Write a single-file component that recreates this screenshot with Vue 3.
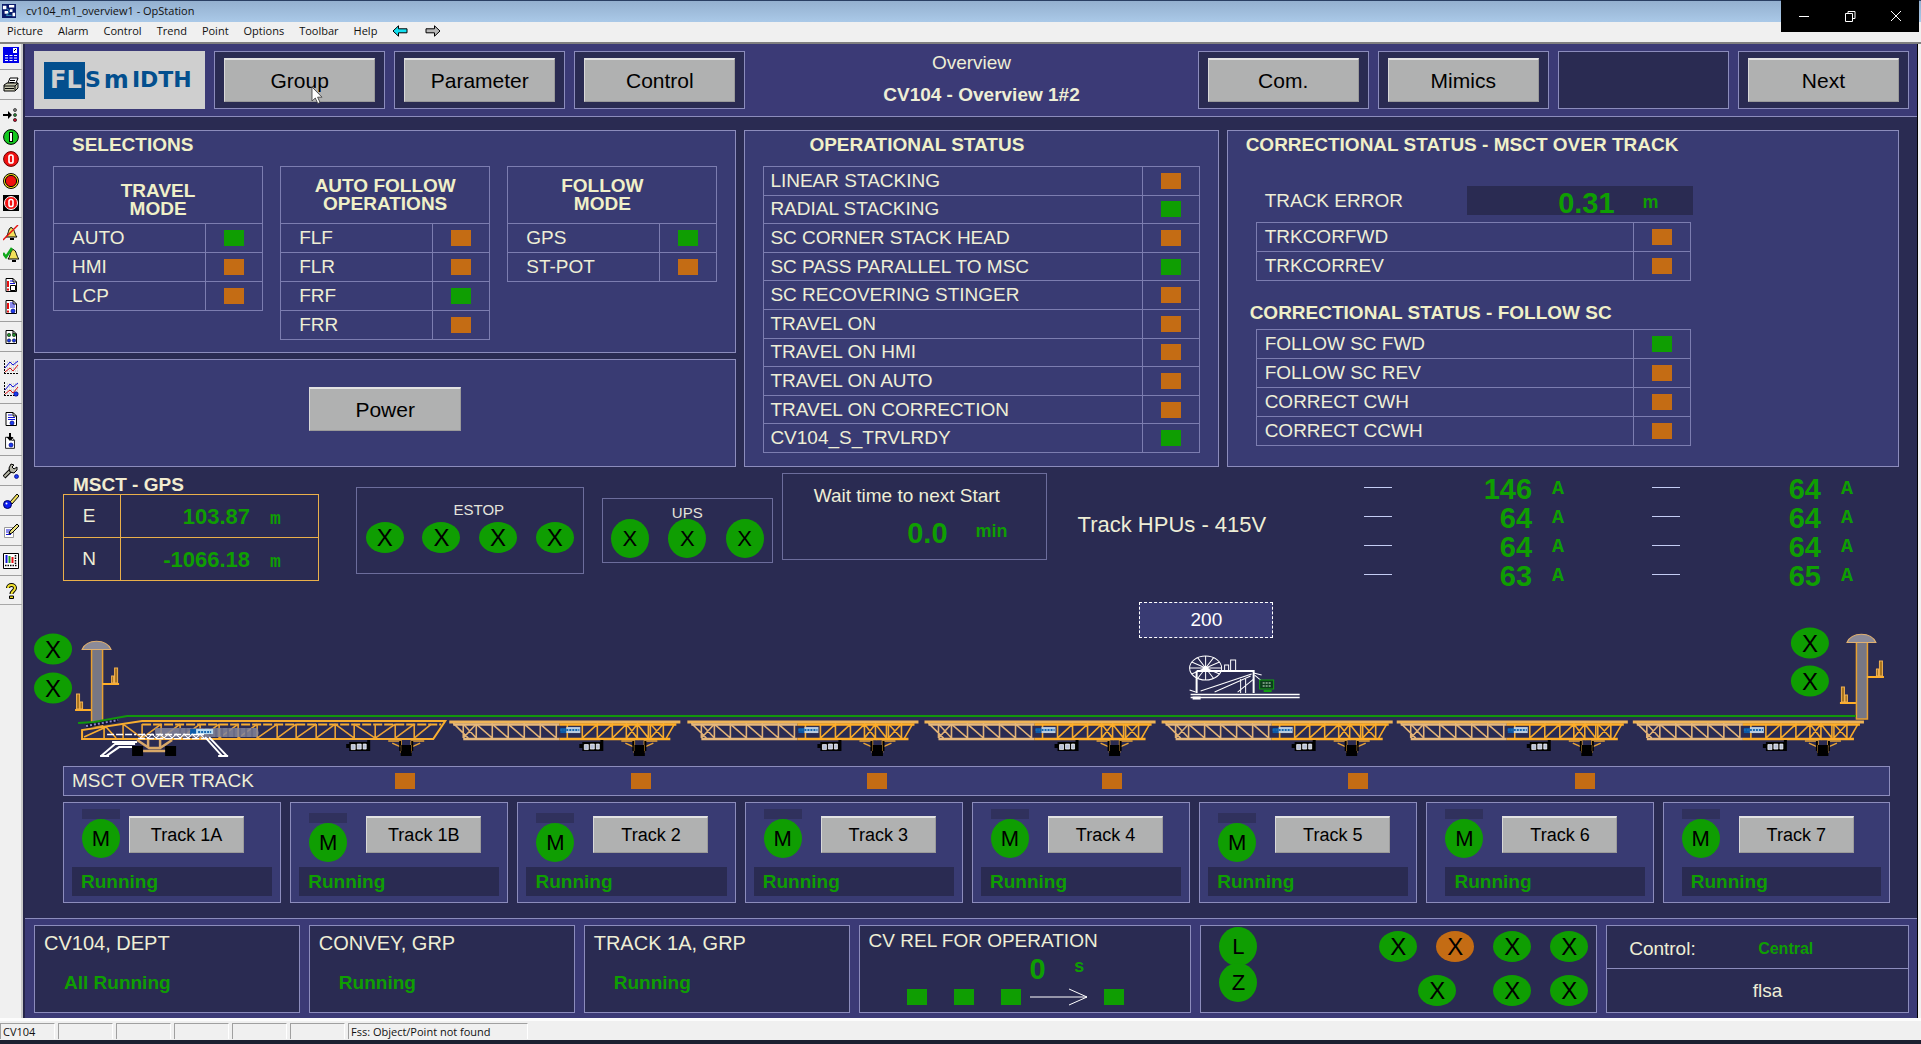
<script setup>
import { ref } from 'vue'

const MENUS = ['Picture', 'Alarm', 'Control', 'Trend', 'Point', 'Options', 'Toolbar', 'Help']

const DOC = '<path d="M3 1.5h7l3.500 3.500v9.500H3z" fill="#fff" stroke="#000"/><path d="M10 1.500v3.500h3.500" fill="none" stroke="#000"/>'
const AXES = '<path d="M1.500 1v14M1 14.500h14" stroke="#000" stroke-dasharray="2 1" fill="none"/><path d="M4 3h11M4 6h11M4 9h11M4 12h11" stroke="#bbb" stroke-dasharray="1 1"/><path d="M2 9l5-6 3 3 5-4" stroke="#1414d8" fill="none"/><path d="M2 13l5-4 3 3 5-6" stroke="#d81414" fill="none"/>'
const BALL = (x, y, r = 2) => `<circle cx="${x}" cy="${y}" r="${r}" fill="#1a3cf0" stroke="#000080" stroke-width=".7"/>`
const BELL = '<path d="M8 2.500c-3 1-2 6-5 9.500h11c-3-3-2-8.500-6-9.500z" fill="#f2e05a" stroke="#000"/><path d="M7 13h4v2H7z" fill="#000"/>'

// toolbar groups, top to bottom
const TOOLBAR = [
  [{ name: 'Summary', svg: '<path d="M0 0h16v16H0z" fill="#0000e8"/><path d="M10 1h4v5h-4z" fill="#fff"/><path d="M11 4l2-2" stroke="#000"/><path d="M2 8.500h12M2 11h12M2 13.500h12" stroke="#fff" stroke-dasharray="3 1.500"/>' }],
  [{ name: 'Print', svg: '<path d="M5 6l2-5h8l-2 5" fill="#fff" stroke="#000"/><path d="M7 3.500h5M6.500 5.500h5" stroke="#000"/><path d="M1 8l3-2h11v5l-3 3H1z" fill="#c8c8b0" stroke="#000"/><path d="M1 9h11v4M12 9l3-3M2 11.500h9" stroke="#000" fill="none"/>' }],
  [
    { name: 'Go to', svg: '<path d="M0 7h5V4l4 4-4 4V9H0z"/><circle cx="12" cy="3" r="1.500" fill="#888" stroke="#000" stroke-width=".6"/><circle cx="12" cy="8" r="1.500" fill="#2c8c3c" stroke="#000" stroke-width=".6"/><circle cx="12" cy="13" r="1.600" fill="#c8102e" stroke="#000" stroke-width=".6"/>' },
    { name: 'Start', svg: '<circle cx="8" cy="8" r="7.400" fill="#12c81e" stroke="#000"/><rect x="6.500" y="3.500" width="3" height="9" fill="#fff" stroke="#000"/>' },
    { name: 'Stop', svg: '<circle cx="8" cy="8" r="7.400" fill="#f01010" stroke="#600"/><rect x="6" y="4" width="4" height="8" rx="1.800" fill="none" stroke="#fff" stroke-width="1.700"/>' },
    { name: 'Emergency', svg: '<circle cx="8" cy="8" r="7.500" fill="#f8e020" stroke="#000"/><circle cx="8" cy="8" r="5.600" fill="#f01010" stroke="#000"/>' },
    { name: 'Master stop', svg: '<path d="M0 0h16v16H0z"/><circle cx="8" cy="8" r="6.500" fill="#f01010" stroke="#fff"/><rect x="6" y="4.500" width="4" height="7" rx="1.800" fill="none" stroke="#fff" stroke-width="1.600"/>' }
  ],
  [
    { name: 'Silence', svg: BELL + '<path d="M0 15L15 0" stroke="#e81010" stroke-width="1.400"/>' },
    { name: 'Acknowledge', svg: '<g transform="translate(2 0)">' + BELL + '</g><path d="M0 6l3 4 6-9" stroke="#10a81c" stroke-width="2.600" fill="none"/>' }
  ],
  [
    { name: 'Event log', svg: DOC + '<path d="M5 4v6" stroke="#e81010" stroke-width="2"/><path d="M5 11.500v2" stroke="#e81010" stroke-width="2"/><path d="M7 4h3M7 6.500h5" stroke="#1414d8"/><path d="M7.500 8.500h5v5h-5z" fill="#fff" stroke="#000"/>' },
    { name: 'Alarm log', svg: DOC + '<path d="M5 4v6M5 11.500v2" stroke="#e81010" stroke-width="2"/><path d="M7 4h3M7 6h5M7 8h5" stroke="#1414d8"/>' + BALL(10, 12) }
  ],
  [{ name: 'Points', svg: DOC + '<g stroke="#000" stroke-width=".5"><circle cx="6" cy="6" r="1.700" fill="#1e8c28"/><circle cx="11" cy="6" r="1.700" fill="#1e8c28"/><circle cx="6" cy="11.500" r="1.700" fill="#1a3cf0"/><circle cx="11" cy="11.500" r="1.700" fill="#1a3cf0"/></g>' }],
  [
    { name: 'Trend', svg: AXES },
    { name: 'Point trend', svg: AXES + BALL(13, 13, 2.2) }
  ],
  [
    { name: 'Report', svg: DOC + '<path d="M5 4h4M5 6.500h7M5 8.500h7" stroke="#1414d8"/>' + BALL(9, 12) },
    { name: 'Import', svg: '<g transform="translate(0 3) scale(.85)">' + DOC + '</g><path d="M6 0v4H3.500L7 8l3.500-4H8V0z"/>' + BALL(8, 12) }
  ],
  [{ name: 'Service', svg: '<path d="M1 14l7-7" stroke="#000" stroke-width="4"/><path d="M1.500 13.500l7-7" stroke="#b8b8a8" stroke-width="2"/><path d="M8 1l3 1-2 2 2 2 3-2v3l-3 3-4-1-1-4z" fill="#b8b8a8" stroke="#000"/>' + BALL(13.5, 13.5, 2) }],
  [{ name: 'Paint', svg: '<path d="M7 9l7-8 2 2-7 8z" fill="#f0e060" stroke="#000"/><circle cx="4.500" cy="11.500" r="4" fill="#0a1cf0" stroke="#000060"/><circle cx="3.500" cy="10.500" r="1" fill="#fff"/>' }],
  [{ name: 'Note', svg: '<path d="M1.500 4.500h9v10h-9z" fill="#fff" stroke="#999"/><path d="M3 7h5M3 9h4M3 11.500h5" stroke="#1414d8"/><path d="M6 11l1-3 7-7 2 2-7 7z" fill="#e8e080" stroke="#000"/>' }],
  [{ name: 'Bars', svg: '<path d="M.5.5h15v15H.5z" fill="#fff" stroke="#000"/><path d="M3.500 2v8" stroke="#1414d8" stroke-width="2"/><path d="M6.500 3v7" stroke="#1e9c28" stroke-width="2"/><path d="M9.500 4v6" stroke="#e81010" stroke-width="2"/><path d="M12.500 2v9M2 12.500h12" stroke="#000" stroke-width="1.500" stroke-dasharray="1.500 1"/>' }],
  [{ name: 'Help', svg: '<path d="M5 5c0-4 7-4 7 0 0 3-3.500 3-3.500 6" stroke="#000" stroke-width="4" fill="none"/><path d="M5 5c0-4 7-4 7 0 0 3-3.500 3-3.500 6" stroke="#f0e030" stroke-width="2" fill="none"/><path d="M6.500 13h4v2.500h-4z" fill="#e8d820" stroke="#000"/>' }]
]

const navLeft = ['Group', 'Parameter', 'Control']
const navRight = ['Com.', 'Mimics', '', 'Next']

const selections = ref([
  { title: ['TRAVEL', 'MODE'], kind: 'low', rows: [['AUTO', true], ['HMI', false], ['LCP', false]] },
  { title: ['AUTO FOLLOW', 'OPERATIONS'], kind: '', rows: [['FLF', false], ['FLR', false], ['FRF', true], ['FRR', false]] },
  { title: ['FOLLOW', 'MODE'], kind: 'lead', rows: [['GPS', true], ['ST-POT', false]] }
])

const operational = ref([
  ['LINEAR STACKING', false],
  ['RADIAL STACKING', true],
  ['SC CORNER STACK HEAD', false],
  ['SC PASS PARALLEL TO MSC', true],
  ['SC RECOVERING STINGER', false],
  ['TRAVEL ON', false],
  ['TRAVEL ON HMI', false],
  ['TRAVEL ON AUTO', false],
  ['TRAVEL ON CORRECTION', false],
  ['CV104_S_TRVLRDY', true]
])

const overTrack = ref([['TRKCORFWD', false], ['TRKCORREV', false]])
const followSc = ref([
  ['FOLLOW SC FWD', true],
  ['FOLLOW SC REV', false],
  ['CORRECT CWH', false],
  ['CORRECT CCWH', false]
])

const gps = ref([['E', '103.87'], ['N', '-1066.18']])
const hpus = ref([[146, 64, 64, 63], [64, 64, 64, 65]])
const position = ref('200')

const tracks = ref([
  { name: 'Track 1A', tight: true },
  { name: 'Track 1B', low: true },
  { name: 'Track 2', low: true },
  { name: 'Track 3' },
  { name: 'Track 4' },
  { name: 'Track 5', low: true },
  { name: 'Track 6', wide: true },
  { name: 'Track 7', wide: true }
])

const groups = ref([
  { title: 'CV104, DEPT', state: 'All Running' },
  { title: 'CONVEY, GRP', state: 'Running' },
  { title: 'TRACK 1A, GRP', state: 'Running' }
])

// bridge spans: left edge of every identical truss
const SPANS = [449, 687, 924, 1161, 1396, 1632]
const SPOKES = Array.from({ length: 12 }, (_, i) => {
  const a = (i * Math.PI) / 6
  return `M1205 669l${(Math.cos(a) * 16).toFixed(1)} ${(Math.sin(a) * 12).toFixed(1)}`
}).join('')

// first truss, posts with diagonals between them
const FIRST_POSTS = [123, 142, 161, 180, 200, 219, 238, 257, 277, 296, 316, 335, 354, 375, 395, 414]
const FIRST_WEB = FIRST_POSTS.map((x, i) => {
  const next = FIRST_POSTS[i + 1] || 431
  const down = x === 123 || x === 335 || x === 354
  return `M${x} 725v14` + (down ? `M${x} 725L${next} 739` : `M${x} 739L${next} 725`)
}).join('')
const TICKS = Array.from({ length: 13 }, (_, i) => `M${180 + i * 6} 729v9`).join('')
</script>

<template>
  <div class="window">
    <header class="titlebar">
      <svg class="app-icon" viewBox="0 0 16 16" width="14" height="14" aria-hidden="true">
        <path d="M0 0h16v16H0z" fill="#0a1a6a" />
        <path d="M1 2h4v4H1zM8 1h6v3H8zM3 8h4v3H3zM9 6h3v3H9zM12 10h3v4h-3z" fill="#fff" />
        <path d="M5 5l4 3-4 5h6" stroke="#4ac" fill="none" />
      </svg>
      <span>cv104_m1_overview1 - OpStation</span>
    </header>

    <div class="caption-buttons">
      <button aria-label="Minimize"><svg viewBox="0 0 12 12" width="12" height="12"><path d="M1 6.500h10" /></svg></button>
      <button aria-label="Restore"><svg viewBox="0 0 12 12" width="12" height="12"><path d="M1.500 3.500h7v8h-7zM4 3.500v-2h7v7H8.500" /></svg></button>
      <button aria-label="Close"><svg viewBox="0 0 12 12" width="12" height="12"><path d="M1 1l10 10M11 1L1 11" /></svg></button>
    </div>

    <nav class="menubar">
      <button v-for="m in MENUS" :key="m">{{ m }}</button>
      <button class="history" aria-label="Back">
        <svg viewBox="0 0 16 12" width="16" height="12"><path d="M6.500.8v3h8.500v4H6.500v3.400L1 6z" fill="#12e0f0" stroke="#000" /></svg>
      </button>
      <button class="history" aria-label="Forward">
        <svg viewBox="0 0 16 12" width="16" height="12"><path d="M9.500.8v3H1v4h8.500v3.400L15 6z" fill="#b8b8b8" stroke="#000" /></svg>
      </button>
    </nav>

    <div class="workspace">
      <aside class="toolbar">
        <div class="tools">
          <div v-for="(group, g) in TOOLBAR" :key="g" class="tool-group">
            <button v-for="t in group" :key="t.name" :aria-label="t.name">
              <svg viewBox="0 0 16 16" width="16" height="16" v-html="t.svg"></svg>
            </button>
          </div>
        </div>
      </aside>

      <div class="screen">
        <header class="top">
          <div class="logo">
            <span class="logo-fl">FL</span>
            <span class="logo-s">S</span>
            <span class="logo-m">m</span>
            <span class="logo-rest">IDTH</span>
          </div>
          <div v-for="n in navLeft" :key="n" class="slot"><button class="key">{{ n }}</button></div>
          <div class="heading">
            <p>Overview</p>
            <h1>CV104 - Overview 1#2</h1>
          </div>
          <div v-for="n in navRight" :key="n" class="slot"><button v-if="n" class="key">{{ n }}</button></div>
          <svg class="pointer" viewBox="0 0 12 19" width="12" height="19" aria-hidden="true">
            <path d="M1 1v14l3.300-3 2.500 5.500 2.200-1-2.400-5.300H11z" fill="#fff" stroke="#333" stroke-width=".8" />
          </svg>
        </header>

        <main class="body">
          <section class="panels">
            <div class="left-col">
              <div class="panel selections">
                <h2>SELECTIONS</h2>
                <div class="mode-tables">
                  <table v-for="s in selections" :key="s.title.join()" class="grid-table">
                    <thead>
                      <tr><th colspan="2" :class="s.kind">{{ s.title[0] }}<br>{{ s.title[1] }}</th></tr>
                    </thead>
                    <tbody>
                      <tr v-for="[label, on] in s.rows" :key="label">
                        <td>{{ label }}</td>
                        <td class="lamp-cell"><i class="lamp" :class="{ on }"></i></td>
                      </tr>
                    </tbody>
                  </table>
                </div>
              </div>
              <div class="panel power"><button class="key">Power</button></div>
            </div>

            <div class="panel operational">
              <h2>OPERATIONAL STATUS</h2>
              <table class="grid-table close">
                <tbody>
                  <tr v-for="[label, on] in operational" :key="label">
                    <td>{{ label }}</td>
                    <td class="lamp-cell"><i class="lamp" :class="{ on }"></i></td>
                  </tr>
                </tbody>
              </table>
            </div>

            <div class="panel correctional">
              <h2>CORRECTIONAL STATUS - MSCT OVER TRACK</h2>
              <div class="track-error">
                <span>TRACK ERROR</span>
                <div class="error-box"><b class="big">0.31</b><b class="unit">m</b></div>
              </div>
              <table class="grid-table close">
                <tbody>
                  <tr v-for="[label, on] in overTrack" :key="label">
                    <td>{{ label }}</td>
                    <td class="lamp-cell"><i class="lamp" :class="{ on }"></i></td>
                  </tr>
                </tbody>
              </table>
              <h2 class="second">CORRECTIONAL STATUS - FOLLOW SC</h2>
              <table class="grid-table close">
                <tbody>
                  <tr v-for="[label, on] in followSc" :key="label">
                    <td>{{ label }}</td>
                    <td class="lamp-cell"><i class="lamp" :class="{ on }"></i></td>
                  </tr>
                </tbody>
              </table>
            </div>
          </section>

          <section class="readouts">
            <div class="gps">
              <h2>MSCT - GPS</h2>
              <table>
                <tbody>
                  <tr v-for="[axis, value] in gps" :key="axis">
                    <th>{{ axis }}</th>
                    <td><b>{{ value }}</b><b class="mono">m</b></td>
                  </tr>
                </tbody>
              </table>
            </div>
            <div class="box estop">
              <p>ESTOP</p>
              <div class="discs"><span v-for="n in 4" :key="n" class="disc flat">X</span></div>
            </div>
            <div class="box ups">
              <p>UPS</p>
              <div class="discs"><span v-for="n in 3" :key="n" class="disc">X</span></div>
            </div>
            <div class="box wait">
              <p>Wait time to next Start</p>
              <div class="wait-value"><b class="big">0.0</b><b class="unit">min</b></div>
            </div>
            <p class="hpu-title">Track HPUs - 415V</p>
            <div v-for="(col, c) in hpus" :key="c" class="hpu" :class="`hpu-${c + 1}`">
              <div v-for="(amps, i) in col" :key="i" class="hpu-row">
                <i class="dash"></i><b class="big">{{ amps }}</b><b class="mono">A</b>
              </div>
            </div>
          </section>

          <section class="mimic">
            <svg viewBox="25 600 1891 160" aria-hidden="true">
              <!-- service platforms and masts -->
              <g v-for="m in [[82, 642], [1846, 635]]" :key="m[0]" :transform="`translate(${m[0]} ${m[1]})`">
                <path d="M9.500 8v77h11V8" fill="#777784" stroke="#e8a030" stroke-width="1.500" />
                <path d="M0 8.500C5-2.500 24-2.500 29 8.500z" fill="#8b8a98" stroke="#e0b070" />
                <path d="M20 43h17M-7 69H9" stroke="#ffae28" stroke-width="2" fill="none" />
                <path d="M32.500 27h3v15h-3zM29.500 35h2v7h-2zM-5.500 53h3v15h-3zM-2 61h2.500v7H-2z" fill="#a8741e" stroke="#f0b050" />
              </g>

              <!-- first truss -->
              <path d="M142 722H445L433 740H82V731z" fill="none" stroke="#f8ae30" stroke-width="2" />
              <path d="M142 725.500H441" stroke="#f8ae30" stroke-dasharray="9 2" stroke-width="2" />
              <path :d="FIRST_WEB" stroke="#eda435" stroke-width="1.600" fill="none" />
              <path d="M84 738l22-10 10 11M104 728v11" stroke="#f8ae30" stroke-width="1.600" fill="none" />
              <path d="M155 729h102q3 5 0 9H155z" fill="#85869a" opacity=".85" />
              <path :d="TICKS" stroke="#6a6b84" stroke-width="2" />
              <path d="M190 730h6v6h-6z" fill="#0a5aa8" /><path d="M196 730h17v5h-17z" fill="#b8dcf0" />
              <path d="M198 733h13" stroke="#1868b0" stroke-width="2" stroke-dasharray="2 1" />
              <path d="M107 735.500h29M138 739.500h70M138 735.500h66" stroke="#fff" stroke-width="1.500" stroke-dasharray="7 2" fill="none" />
              <path d="M140 739l4-4 4 4 4-4 4 4 4-4 4 4 4-4 4 4 4-4 4 4 4-4 4 4 4-4 4 4 4-4 4 4" stroke="#fff" fill="none" />
              <path d="M101 757l14-12h20M106 757l13-9h13M100 757h9M112 743h25" stroke="#fff" stroke-width="2" fill="none" />
              <path d="M205 738l17 19M209 738l18 19M218 757h10" stroke="#fff" stroke-width="2" fill="none" />
              <path d="M132 747h11v10h-11zM165 747h11v10h-11z" />
              <path d="M143 752h22M148 741v8M160 741v8M137 741l12 8h11l12-8" stroke="#d8a868" stroke-width="2.500" fill="none" />
              <path d="M86 727l32-6" stroke="#101030" stroke-width="4" />
              <path d="M86 727l32-6" stroke="#8888c8" stroke-dasharray="2 2" stroke-width="2" />

              <!-- repeated spans -->
              <g v-for="x in SPANS" :key="x" :transform="`translate(${x} 721)`" fill="none">
                <path d="M4 3L19 18M14 4v14M27 4v14M14 4l13 14M27 4L14 18M27 4l16 14V4l16 14V4l16 14V4l16 14V4l16 14V4" stroke="#e2b276" stroke-width="1.600" />
                <path d="M118 4v14M133 4v14l15-14v14l15-14v14l14-14v14l11-14v14L177 4M188 4l11 14V4M201 4v14l13-14v14L201 4M225 4l-8 14" stroke="#f5a92c" stroke-width="1.600" />
                <path d="M0 2H231" stroke="#eeb458" stroke-width="3" />
                <path d="M4 4.500H110M14 19H110" stroke="#e6b87c" stroke-width="2.500" />
                <path d="M110 4.500H227M110 19H221" stroke="#ffae28" stroke-width="2.500" />
                <path d="M111 8h6v5h-6z" fill="#0a5aa8" /><path d="M117 7h14v6h-14z" fill="#b8cce0" />
                <path d="M111 10h19" stroke="#1868b0" stroke-width="2" stroke-dasharray="2 1" />
              </g>

              <!-- drives and wheels under each span -->
              <g v-for="x in [216, ...SPANS]" :key="x" :transform="`translate(${x} 741)`">
                <path d="M133 2h18v-2h3v11h-21v-3h-3V4h3z" />
                <path d="M135 4.500h4v5h-4zM141 4h4v5h-4zM147 4h3v5h-3z" fill="#b8c0d8" stroke="#fff" stroke-width=".7" />
                <path d="M172 1h13v12M208 1h-13v12M176 3l9 4M204 3l-9 4" fill="none" stroke="#e8a438" stroke-width="1.500" />
                <path d="M184.500 5h11v11h-11zM183 1v10h2V1zM195 1v10h2V1z" />
              </g>

              <path d="M78 724l16-1 33-6H1855" fill="none" stroke="#12960c" stroke-width="2" />

              <!-- spreader car -->
              <g stroke="#fff" fill="none">
                <ellipse cx="1205" cy="669" rx="16" ry="12" />
                <path :d="SPOKES" />
                <path d="M1196 672h57v22M1196 672v22" stroke-width="2" />
                <path d="M1200 692l51-17M1214 693l36-16M1253 674l8 2M1253 680l-16 13M1240 680v14M1245 680v14" />
                <path d="M1224 671v-5h4v5M1230 671v-10h5v10" />
                <path d="M1190 695.500H1299M1190 698.500H1299" stroke-width="1.500" />
                <path d="M1192 699h8" stroke-width="3" />
                <path d="M1189 691l6 2M1254 676l6 5" />
              </g>
              <path d="M1259 681h14v9h-14z" fill="#0c3c1c" stroke="#12a010" />
              <path d="M1262 684h9M1262 687h9" stroke="#d8f0d8" stroke-dasharray="2 1" />
              <path d="M1263 692h8" stroke="#12a010" stroke-width="2" />

              <g class="nodes">
                <template v-for="p in [[53, 650], [53, 689], [1809, 644], [1809, 682]]" :key="p.join()">
                  <ellipse :cx="p[0]" :cy="p[1]" rx="19" ry="15.500" />
                  <text :x="p[0]" :y="p[1] + 9">X</text>
                </template>
              </g>
            </svg>
            <input v-model="position" class="position" aria-label="Spreader position">
          </section>

          <section class="over-track">
            <span>MSCT OVER TRACK</span>
            <i v-for="n in 6" :key="n" class="lamp"></i>
          </section>

          <section class="tracks">
            <div v-for="t in tracks" :key="t.name" class="panel track" :class="{ tight: t.tight, low: t.low, wide: t.wide }">
              <div class="track-top">
                <div class="motor"><i></i><span class="disc">M</span></div>
                <button class="key">{{ t.name }}</button>
              </div>
              <div class="state">Running</div>
            </div>
          </section>
        </main>

        <footer class="bottom">
          <div v-for="g in groups" :key="g.title" class="box group">
            <h3>{{ g.title }}</h3>
            <b>{{ g.state }}</b>
          </div>
          <div class="box release">
            <h3>CV REL FOR OPERATION</h3>
            <div class="release-value"><b class="big">0</b><b class="mono">s</b></div>
            <div class="release-chain">
              <i v-for="n in 3" :key="n" class="lamp on"></i>
              <svg viewBox="0 0 58 18" width="58" height="18"><path d="M0 9h57M39 1l18 8-18 8" /></svg>
              <i class="lamp on"></i>
            </div>
          </div>
          <div class="box interlocks">
            <div class="stack"><span class="disc">L</span><span class="disc">Z</span></div>
            <div class="lock-rows">
              <div class="discs">
                <span class="disc flat">X</span><span class="disc flat warn">X</span><span class="disc flat">X</span><span class="disc flat">X</span>
              </div>
              <div class="discs">
                <span class="disc flat apart">X</span><span class="disc flat">X</span><span class="disc flat">X</span>
              </div>
            </div>
          </div>
          <div class="box control">
            <div class="control-row"><span>Control:</span><b>Central</b></div>
            <div class="user">flsa</div>
          </div>
        </footer>
      </div>
    </div>

    <footer class="statusbar">
      <span class="cell">CV104</span>
      <span v-for="n in 5" :key="n" class="cell"></span>
      <span class="cell message">Fss: Object/Point not found</span>
    </footer>
    <div class="taskbar"></div>
  </div>
</template>

<style>
body {
  margin: 0;
  background: #f0f0f0;
}
</style>

<style scoped>
* {
  box-sizing: border-box;
}

.window {
  position: relative;
  min-height: 100vh;
  display: flex;
  flex-direction: column;
  background: #f0f0f0;
  font-family: 'Liberation Sans', Arial, sans-serif;
  font-size: 19px;
  line-height: 22px;
  color: #eeeed6;
}

p, h1, h2, h3 {
  margin: 0;
  font-size: 19px;
}

p {
  font-weight: 400;
}

button {
  font-family: inherit;
  padding: 0;
  border: 0;
  background: none;
}

.titlebar,
.menubar,
.statusbar {
  font-family: 'Open Sans', 'Noto Sans', sans-serif;
  font-size: 11px;
  color: #101010;
}

.titlebar {
  height: 22px;
  display: flex;
  align-items: center;
  gap: 10px;
  padding: 0 0 2px 2px;
  border-top: 1px solid #2a3f63;
  background: linear-gradient(#94b0cf, #aac9e8);
}

.caption-buttons {
  position: absolute;
  top: 0;
  right: 2px;
  display: flex;
  background: #000;
}

.caption-buttons button {
  width: 46px;
  height: 32px;
  display: flex;
  align-items: center;
  justify-content: center;
}

.caption-buttons path {
  fill: none;
  stroke: #fff;
}

.menubar {
  height: 20px;
  display: flex;
  align-items: center;
  gap: 15px;
  padding: 0 0 2px 7px;
}

.menubar button {
  font-size: 11px;
  line-height: 18px;
  color: #101010;
}

.menubar .history {
  display: flex;
  margin-right: 2px;
}

.workspace {
  flex: 1;
  display: flex;
  padding-right: 3px;
  border-top: 2px solid #808080;
}

.toolbar {
  width: 25px;
  flex: none;
  border-right: 2px solid #26264a;
  box-shadow: inset -2px 0 #c8c8c8;
}

.tools {
  width: 22px;
  border-bottom: 1px solid #a8a8a8;
  padding-bottom: 2px;
}

.tool-group + .tool-group {
  margin-top: 3px;
  padding-top: 4px;
  border-top: 1px solid #a0a0a0;
}

.tool-group button {
  width: 22px;
  height: 22px;
  display: flex;
  align-items: center;
  justify-content: center;
}

.screen {
  flex: 1;
  min-width: 0;
  display: flex;
  flex-direction: column;
  background: #2a2b52;
  border-right: 1px solid #000;
}

.top {
  position: relative;
  display: grid;
  grid-template-columns: repeat(4, 171fr) 434fr repeat(4, 171fr);
  gap: 9px;
  height: 73px;
  padding: 7px 8px 7px 9px;
  background: #3b3a76;
  border-bottom: 1px solid #8c8cbc;
}

.logo {
  display: flex;
  align-items: center;
  padding-left: 10px;
  background: #cfcfcf;
  color: #034f8e;
  font-family: 'DejaVu Sans', sans-serif;
  font-weight: 700;
}

.logo-fl {
  height: 37px;
  width: 41px;
  padding-left: 6px;
  background: #034f8e;
  color: #cfcfcf;
  font-size: 24px;
  line-height: 36px;
}

.logo-s {
  font-size: 22px;
}

.logo-m {
  margin: 0 3px;
  font-size: 24px;
}

.logo-rest {
  font-size: 22px;
}

.slot {
  padding: 6px 9px;
  background: #2a2b52;
  border: 1px solid #8c8cbc;
}

.key {
  background: #b0b1b1;
  border: 1px solid #9a9a9a;
  border-top: 2px solid #e2e2e2;
  border-left-color: #d8d8d8;
  color: #000;
  font-size: 21px;
}

.slot .key {
  width: 100%;
  height: 100%;
}

.heading {
  text-align: center;
  padding-top: 1px;
}

.heading h1 {
  margin-top: 10px;
  padding-left: 20px;
}

.pointer {
  position: absolute;
  left: 286px;
  top: 42px;
}

.body {
  flex: 1;
  padding-top: 13px;
}

.panels {
  display: grid;
  grid-template-columns: 702fr 474fr 672fr;
  gap: 8px;
  height: 337px;
  padding: 0 18px 0 9px;
}

.panel {
  background: #393b73;
  border: 1px solid #8c8cbc;
}

.panel h2 {
  margin-bottom: 10px;
  color: #f0f0c8;
}

.left-col {
  display: flex;
  flex-direction: column;
  gap: 6px;
}

.selections {
  height: 223px;
  padding: 3px 18px;
}

.selections h2 {
  padding-left: 19px;
}

.mode-tables {
  display: grid;
  grid-template-columns: repeat(3, 1fr);
  align-items: start;
  gap: 17px;
}

.grid-table {
  width: 100%;
  border-collapse: collapse;
}

.grid-table th,
.grid-table td {
  padding: 0;
  border: 1px solid #7c7db0;
}

.grid-table th {
  height: 57px;
  line-height: 18px;
  color: #f0f0c8;
}

.grid-table th.low {
  padding-top: 10px;
}

.grid-table th.lead {
  padding-right: 20px;
}

.grid-table td {
  height: 29px;
  padding-left: 18px;
}

.close td {
  padding-left: 6px;
}

.grid-table .lamp-cell {
  width: 57px;
  padding: 0 18px;
}

.lamp {
  display: block;
  width: 20px;
  height: 16px;
  background: #c46c14;
}

.lamp.on {
  background: #0f9e02;
}

.power {
  flex: 1;
  display: flex;
  align-items: center;
  justify-content: center;
  padding-bottom: 8px;
}

.power .key {
  width: 152px;
  height: 44px;
}

.operational {
  padding: 3px 18px;
}

.operational h2 {
  padding-left: 46px;
}

.operational .grid-table {
  height: 287px;
}

.operational .grid-table td {
  height: 28px;
}

.correctional {
  padding: 3px 18px;
}

.correctional .grid-table {
  width: 435px;
  margin-left: 10px;
}

.correctional .grid-table td {
  padding-left: 8px;
}

.correctional .grid-table .lamp-cell {
  padding: 0 18px;
}

.correctional h2.second {
  margin: 21px 0 5px;
  padding-left: 4px;
}

.track-error {
  display: flex;
  align-items: center;
  margin: 30px 0 7px 19px;
}

.track-error > span {
  width: 202px;
}

.error-box {
  width: 226px;
  height: 29px;
  display: flex;
  justify-content: flex-end;
  gap: 28px;
  padding-right: 34px;
  background: #2a2b52;
}

.big,
.unit,
.mono {
  color: #0f9e02;
}

.big {
  font-size: 29px;
  line-height: 36px;
}

.unit {
  font-size: 18px;
  line-height: 32px;
}

.error-box .big {
  line-height: 34px;
}

.mono {
  font-family: 'Liberation Mono', monospace;
  font-size: 18px;
}

.readouts {
  display: grid;
  grid-template-columns: 256fr 37fr 228fr 18fr 171fr 9fr 265fr 31fr 187fr 98fr 200fr 88fr 201fr;
  align-items: start;
  height: 132px;
  padding: 0 64px 0 38px;
}

.gps {
  grid-column: 1;
  padding-top: 8px;
}

.gps h2 {
  padding-left: 10px;
  line-height: 19px;
  color: #f2ecd0;
}

.gps table {
  width: 100%;
  border-collapse: collapse;
}

.gps th,
.gps td {
  height: 43px;
  padding: 0;
  border: 1px solid #eab04a;
}

.gps th {
  width: 57px;
  padding-right: 6px;
  font-weight: 400;
}

.gps td {
  padding: 4px 37px 0 0;
  text-align: right;
  color: #0f9e02;
  font-size: 22px;
}

.gps .mono {
  margin-left: 20px;
}

.box {
  background: #2a2b52;
  border: 1px solid #6c6d9c;
}

.estop {
  grid-column: 3;
  height: 87px;
  margin-top: 20px;
  padding: 13px 9px;
}

.estop p,
.ups p {
  font-size: 15px;
  line-height: 18px;
  text-align: center;
  color: #e4e4dc;
}

.estop p {
  padding-left: 18px;
  margin-bottom: 3px;
}

.ups {
  grid-column: 5;
  height: 65px;
  margin-top: 31px;
  padding: 8px;
}

.ups p {
  line-height: 12px;
}

.discs {
  display: flex;
  justify-content: space-between;
}

.disc {
  width: 38px;
  height: 39px;
  border-radius: 50%;
  background: #0f9e02;
  color: #000;
  font-size: 22px;
  line-height: 39px;
  text-align: center;
}

.disc.flat {
  height: 31px;
  font-size: 24px;
  line-height: 32px;
}

.disc.warn {
  background: #c46c14;
}

.wait {
  grid-column: 7;
  height: 87px;
  margin-top: 6px;
  padding-top: 11px;
}

.wait p {
  padding-left: 31px;
}

.wait-value {
  display: flex;
  justify-content: flex-end;
  gap: 28px;
  margin-top: 8px;
  padding-right: 38px;
}

.hpu-title {
  grid-column: 9;
  margin-top: 45px;
  font-size: 22px;
  line-height: 26px;
  white-space: nowrap;
}

.hpu {
  margin-top: 8px;
}

.hpu-1 {
  grid-column: 11;
}

.hpu-2 {
  grid-column: 13;
}

.hpu-row {
  display: flex;
  height: 29px;
}

.hpu .big {
  flex: 1;
  line-height: 29px;
  text-align: right;
}

.hpu .mono {
  width: 12px;
  margin-left: 20px;
  font-size: 20px;
  line-height: 28px;
}

.dash {
  width: 28px;
  height: 1px;
  margin-top: 12px;
  background: #c4ccf4;
}

.mimic {
  position: relative;
  margin-bottom: 7px;
}

.mimic svg {
  display: block;
  width: 100%;
}

.nodes ellipse {
  fill: #0f9e02;
}

.nodes text {
  font-size: 24px;
  text-anchor: middle;
  fill: #000;
}

.position {
  position: absolute;
  left: 58.9%;
  top: 3px;
  width: 134px;
  height: 36px;
  border: 1px dashed #fff;
  background: #393b73;
  color: #fff;
  font-family: inherit;
  font-size: 19px;
  text-align: center;
}

.over-track {
  display: grid;
  grid-template-columns: 331fr 236fr 236fr 236fr 246fr 227fr 314fr;
  align-items: center;
  height: 30px;
  margin: 0 27px 6px 38px;
  background: #393b73;
  border: 1px solid #8c8cbc;
}

.over-track span {
  padding-left: 8px;
}

.tracks {
  display: grid;
  grid-template-columns: repeat(6, 218fr) repeat(2, 227fr);
  gap: 9px;
  padding: 0 27px 14px 38px;
}

.track {
  height: 101px;
  padding: 6px 8px;
}

.track-top {
  display: flex;
  align-items: flex-start;
  gap: 19px;
  height: 58px;
  padding-left: 10px;
}

.tight .track-top {
  gap: 9px;
}

.motor i {
  display: block;
  width: 38px;
  height: 10px;
  background: #30315d;
}

.motor .disc {
  display: block;
}

.low .motor {
  padding-top: 4px;
}

.track .key {
  width: 115px;
  height: 37px;
  margin-top: 7px;
  font-size: 18px;
}

.state {
  height: 29px;
  padding-left: 9px;
  background: #2a2b52;
  color: #0f9e02;
  font-weight: 700;
  line-height: 29px;
}

.wide .state {
  margin-left: 10px;
}

.bottom {
  display: grid;
  grid-template-columns: 266fr 266fr 266fr 333fr 397fr 303fr;
  gap: 9px;
  height: 100px;
  padding: 6px 8px 5px 9px;
  background: #3b3a76;
  border-top: 1px solid #8c8cbc;
}

.bottom .box {
  border-color: #8c8cbc;
}

.bottom h3 {
  font-weight: 400;
}

.group {
  padding: 6px 9px;
}

.group h3 {
  font-size: 20px;
  margin-bottom: 18px;
}

.group b {
  padding-left: 20px;
  color: #0f9e02;
}

.release {
  padding: 4px 9px;
}

.release-value {
  display: flex;
  gap: 28px;
  height: 36px;
  padding-left: 161px;
}

.release-value .big {
  line-height: 34px;
}

.release-value .mono {
  line-height: 30px;
}

.release-chain {
  display: flex;
  align-items: center;
  gap: 27px;
  padding-left: 38px;
}

.release-chain svg {
  margin: 0 -11px 0 -18px;
  fill: none;
  stroke: #fff;
}

.interlocks {
  display: flex;
  justify-content: space-between;
  padding: 1px 8px 1px 18px;
}

.stack {
  display: flex;
  flex-direction: column;
}

.stack .disc + .disc {
  margin-top: -3px;
}

.lock-rows {
  display: flex;
  flex-direction: column;
  justify-content: space-between;
  padding: 4px 0 5px;
}

.lock-rows .discs {
  gap: 19px;
  justify-content: flex-end;
}

.apart {
  margin-right: 18px;
}

.control-row,
.user {
  height: 43px;
  line-height: 43px;
}

.control-row {
  display: flex;
  padding-left: 22px;
  line-height: 46px;
  border-bottom: 1px solid #8c8cbc;
}

.control-row span {
  width: 129px;
}

.control-row b {
  font-size: 16px;
  color: #0f9e02;
}

.user {
  padding-left: 20px;
  text-align: center;
}

.statusbar {
  display: flex;
  gap: 3px;
  height: 22px;
  padding: 2px 0 1px;
  border-top: 3px solid #fcfcfc;
  font-size: 11px;
  line-height: 15px;
}

.cell {
  width: 55px;
  padding-left: 2px;
  border-top: 1px solid #a0a0a0;
  border-left: 1px solid #a0a0a0;
  border-right: 1px solid #fff;
}

.message {
  width: 180px;
  white-space: nowrap;
}

.taskbar {
  height: 4px;
  background: #1c2030;
}
</style>
